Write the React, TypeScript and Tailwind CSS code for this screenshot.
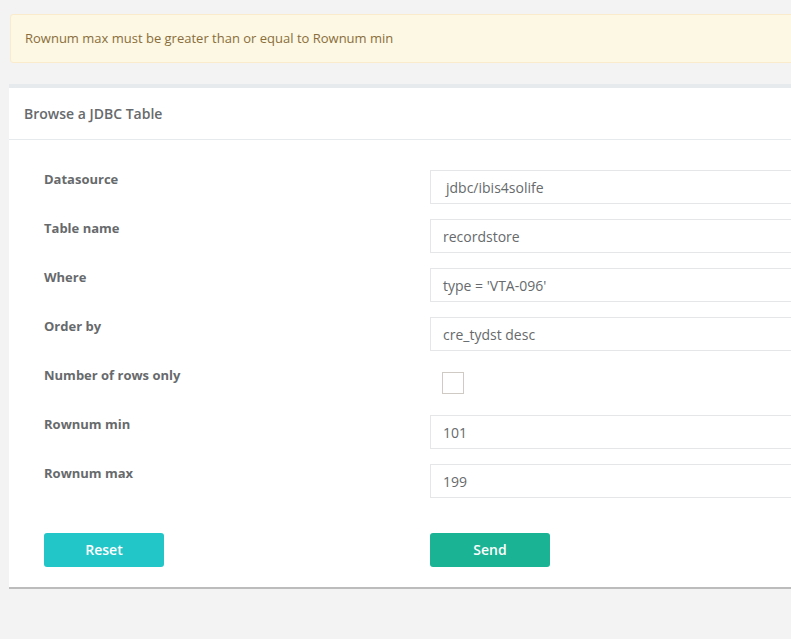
import React from 'react';

// ─── Data ─────────────────────────────────────────────────────────────────────

const fields: { label: string; value?: string; checkbox?: boolean; indent?: boolean }[] = [
  { label: 'Datasource', value: 'jdbc/ibis4solife', indent: true },
  { label: 'Table name', value: 'recordstore' },
  { label: 'Where', value: "type = 'VTA-096'" },
  { label: 'Order by', value: 'cre_tydst desc' },
  { label: 'Number of rows only', checkbox: true },
  { label: 'Rownum min', value: '101' },
  { label: 'Rownum max', value: '199' },
];

// ─── Component ────────────────────────────────────────────────────────────────

export default function App() {
  return (
    <div
      className="w-[791px] h-[639px] overflow-hidden bg-[#f3f3f4] text-[#676a6c]"
      style={{ fontFamily: '"Open Sans", "Liberation Sans", sans-serif' }}
    >
      <div className="w-[1100px] pl-[9px] pt-[14px]">
        {/* Alert */}
        <div className="ml-[1px] mb-[21px] h-[49px] flex items-center px-[14px] bg-[#fcf8e3] border border-[#faebcc] rounded-[3px] text-[13px] text-[#8a6d3b]">
          Rownum max must be greater than or equal to Rownum min
        </div>

        {/* Panel */}
        <div className="bg-white border-t-[4px] border-[#e7eaec] shadow-[0_2px_0_#bcbcbc]">
          <div className="h-[52px] flex items-center px-[15px] border-b border-[#e7eaec]">
            <h5 className="text-[14px] font-semibold text-[#676a6c]">Browse a JDBC Table</h5>
          </div>

          <div className="pt-[30px] pb-[20px] pl-[35px]">
            <div className="flex flex-col gap-[15px]">
              {fields.map((f) => (
                <div key={f.label} className="flex h-[34px]">
                  <label className="w-[386px] text-[13px] font-bold leading-[18px]">{f.label}</label>
                  {f.checkbox ? (
                    <div className="flex-1 flex items-center pl-[12px]">
                      <span className="block w-[22px] h-[22px] border border-[#cfcbc4] bg-white" />
                    </div>
                  ) : (
                    <div
                      className={`flex-1 flex items-center border border-[#e5e6e7] text-[14px] text-[#676a6c] ${
                        f.indent ? 'pl-[15px]' : 'pl-[12px]'
                      }`}
                    >
                      {f.value}
                    </div>
                  )}
                </div>
              ))}
            </div>

            {/* Actions */}
            <div className="flex mt-[35px]">
              <div className="w-[386px]">
                <button className="w-[120px] h-[34px] rounded-[3px] bg-[#23c6c8] text-white text-[14px] font-semibold leading-[32px]">
                  Reset
                </button>
              </div>
              <button className="w-[120px] h-[34px] rounded-[3px] bg-[#1ab394] text-white text-[14px] font-semibold leading-[32px]">
                Send
              </button>
            </div>
          </div>
        </div>
      </div>
    </div>
  );
}
